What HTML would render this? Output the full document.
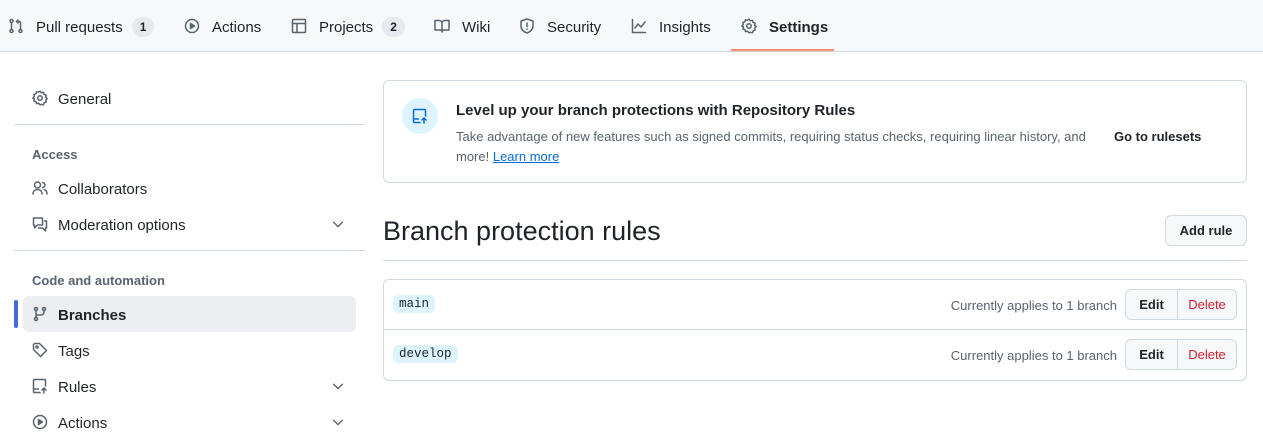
<!DOCTYPE html>
<html><head><style>
*{box-sizing:border-box;margin:0;padding:0}
body{width:1263px;height:439px;overflow:hidden;background:#fff;font-family:"Liberation Sans",sans-serif;color:#1f2328;font-size:14px;position:relative}
.abs{position:absolute}
svg{fill:none;stroke:#59636e;stroke-width:1.5;stroke-linecap:round;stroke-linejoin:round}
.hdr{left:0;top:0;width:1263px;height:52px;background:#f6f8fa;border-bottom:1px solid #d1d9e0}
.tab{position:absolute;top:18px;height:20px;line-height:20px;font-size:15px;display:flex;align-items:center;white-space:nowrap}
.tab svg{width:16px;height:16px;margin-right:12px;flex:none;position:relative;top:-2px}
.cnt{display:inline-block;background:#e6e9ed;border-radius:12px;font-size:12px;line-height:14px;padding:3px 8px;margin-left:9px;font-weight:600;position:relative;top:-1px}
.side{position:absolute;left:32px;height:20px;line-height:20px;font-size:15px;display:flex;align-items:center}
.side svg{width:16px;height:16px;margin-right:10px;flex:none;position:relative;top:-2px}
.hd{position:absolute;left:32px;font-size:13px;color:#59636e;font-weight:600}
.chev{position:absolute;left:331px;width:14px;height:14px}
.hr{position:absolute;height:1px;background:#d1d9e0}
.btn{position:absolute;border:1px solid #d1d9e0;background:#f6f8fa;font-size:13px;font-weight:600;display:flex;align-items:center;justify-content:center}
.code{position:absolute;left:393px;font-family:"Liberation Mono",monospace;font-size:12.5px;background:#ddf4ff;color:#1f2328;border-radius:6px;padding:2px 6px}
.applies{position:absolute;right:146px;font-size:13px;color:#59636e}
</style></head><body>
<div class="abs hdr"></div>
<div class="tab" style="left:8px"><svg viewBox="0 0 16 16"><circle cx="3.5" cy="3" r="1.5"/><circle cx="3.5" cy="13" r="1.5"/><path d="M3.5 4.5v7M12.5 11.5V5a1.5 1.5 0 0 0-1.5-1.5H8.5M10 2l-1.5 1.5L10 5"/><circle cx="12.5" cy="13" r="1.5"/></svg>Pull requests<span class="cnt">1</span></div>
<div class="tab" style="left:184px"><svg viewBox="0 0 16 16"><circle cx="8" cy="8" r="6.5"/><path d="M6.5 5.5v5l4-2.5z" fill="#59636e"/></svg>Actions</div>
<div class="tab" style="left:291px"><svg viewBox="0 0 16 16"><rect x="1.5" y="1.5" width="13" height="13" rx="1"/><path d="M1.5 5.5h13M6 5.5v9"/></svg>Projects<span class="cnt">2</span></div>
<div class="tab" style="left:434px"><svg viewBox="0 0 16 16"><path d="M1 2.5h4.5A2.5 2.5 0 0 1 8 5v9a2 2 0 0 0-2-2H1zM15 2.5h-4.5A2.5 2.5 0 0 0 8 5v9a2 2 0 0 1 2-2h5z"/></svg>Wiki</div>
<div class="tab" style="left:519px"><svg viewBox="0 0 16 16"><path d="M8 1l6 2v5c0 3.5-3 6-6 7-3-1-6-3.5-6-7V3z"/><path d="M8 5v3.5M8 11v.2"/></svg>Security</div>
<div class="tab" style="left:631px"><svg viewBox="0 0 16 16"><path d="M1.5 1.5v13h13M4 10l3-4 3 3 4-5"/></svg>Insights</div>
<div class="tab" style="left:741px;font-weight:600"><svg viewBox="0 0 16 16"><circle cx="8" cy="8" r="2.2"/><path d="M8 1.2l1.4 1.6 2.1-.4.6 2 2 .7-.4 2.1 1.5 1.4-1.5 1.4.4 2.1-2 .7-.6 2-2.1-.4L8 14.8l-1.4-1.6-2.1.4-.6-2-2-.7.4-2.1L.8 8l1.5-1.4-.4-2.1 2-.7.6-2 2.1.4z"/></svg>Settings</div>
<div class="abs" style="left:731px;top:49px;width:103px;height:2px;background:#fd8c73"></div>

<div class="side" style="top:90px"><svg viewBox="0 0 16 16"><circle cx="8" cy="8" r="2.2"/><path d="M8 1.2l1.4 1.6 2.1-.4.6 2 2 .7-.4 2.1 1.5 1.4-1.5 1.4.4 2.1-2 .7-.6 2-2.1-.4L8 14.8l-1.4-1.6-2.1.4-.6-2-2-.7.4-2.1L.8 8l1.5-1.4-.4-2.1 2-.7.6-2 2.1.4z"/></svg>General</div>
<div class="hr" style="left:14px;top:124px;width:351px"></div>
<div class="hd" style="top:147px">Access</div>
<div class="side" style="top:180px"><svg viewBox="0 0 16 16"><circle cx="5.5" cy="5" r="3"/><path d="M1 14c0-3 2-4.5 4.5-4.5S10 11 10 14M10.5 2.5a2.5 2.5 0 0 1 0 5M12 9.5c2 .5 3 2 3 4.5"/></svg>Collaborators</div>
<div class="side" style="top:216px"><svg viewBox="0 0 16 16"><path d="M1.5 2h9v7h-5l-3 3V9h-1zM12.5 5h2v7h-1v3l-3-3h-4"/></svg>Moderation options</div>
<svg class="chev" style="top:217px" viewBox="0 0 16 16"><path d="M3 6l5 5 5-5"/></svg>
<div class="hr" style="left:14px;top:250px;width:351px"></div>
<div class="hd" style="top:273px">Code and automation</div>
<div class="abs" style="left:23px;top:296px;width:333px;height:36px;background:#eceef1;border-radius:6px"></div>
<div class="abs" style="left:14px;top:300px;width:4px;height:28px;background:#4469d8;border-radius:2px"></div>
<div class="side" style="top:306px;font-weight:600"><svg viewBox="0 0 16 16"><circle cx="4" cy="3" r="1.5"/><circle cx="4" cy="13" r="1.5"/><circle cx="12" cy="3" r="1.5"/><path d="M4 4.5v7M12 4.5V6a3 3 0 0 1-3 3H6a2 2 0 0 0-2 2"/></svg>Branches</div>
<div class="side" style="top:342px"><svg viewBox="0 0 16 16"><path d="M1.5 2.5v5l7 7 6-6-7-7h-5z"/><circle cx="5" cy="5" r="1"/></svg>Tags</div>
<div class="side" style="top:378px"><svg viewBox="0 0 16 16"><path d="M8 14.5H2.5a1 1 0 0 1-1-1v-11a1 1 0 0 1 1-1h10a1 1 0 0 1 1 1V8M1.5 11h5M12 15V10M10 12l2-2 2 2"/></svg>Rules</div>
<svg class="chev" style="top:379px" viewBox="0 0 16 16"><path d="M3 6l5 5 5-5"/></svg>
<div class="side" style="top:414px"><svg viewBox="0 0 16 16"><circle cx="8" cy="8" r="6.5"/><path d="M6.5 5.5v5l4-2.5z" fill="#59636e"/></svg>Actions</div>
<svg class="chev" style="top:415px" viewBox="0 0 16 16"><path d="M3 6l5 5 5-5"/></svg>

<div class="abs" style="left:383px;top:80px;width:864px;height:103px;border:1px solid #d1d9e0;border-radius:6px"></div>
<div class="abs" style="left:402px;top:98px;width:36px;height:36px;border-radius:50%;background:#ddf4ff"></div>
<svg class="abs" style="left:412px;top:108px;width:16px;height:16px;stroke:#0969da" viewBox="0 0 16 16"><path d="M8 14.5H2.5a1 1 0 0 1-1-1v-11a1 1 0 0 1 1-1h10a1 1 0 0 1 1 1V8M1.5 11h5M12 15V10M10 12l2-2 2 2"/></svg>
<div class="abs" style="left:456px;top:102px;font-size:15px;font-weight:600">Level up your branch protections with Repository Rules</div>
<div class="abs" style="left:456px;top:127px;width:660px;font-size:13px;line-height:20px;color:#59636e">Take advantage of new features such as signed commits, requiring status checks, requiring linear history, and more! <span style="color:#0969da;text-decoration:underline">Learn more</span></div>
<div class="abs" style="left:1114px;top:129px;font-size:13px;font-weight:600">Go to rulesets</div>

<div class="abs" style="left:383px;top:216px;font-size:27px">Branch protection rules</div>
<div class="btn" style="left:1165px;top:215px;width:82px;height:31px;border-radius:6px">Add rule</div>
<div class="hr" style="left:383px;top:260px;width:864px"></div>

<div class="abs" style="left:383px;top:279px;width:864px;height:102px;border:1px solid #d1d9e0;border-radius:6px"></div>
<div class="hr" style="left:384px;top:329px;width:862px"></div>
<div class="code" style="top:295px">main</div>
<div class="applies" style="top:298px">Currently applies to 1 branch</div>
<div class="btn" style="left:1125px;top:289px;width:53px;height:31px;border-radius:6px 0 0 6px">Edit</div>
<div class="btn" style="left:1177px;top:289px;width:60px;height:31px;border-radius:0 6px 6px 0;color:#cf222e;font-weight:400">Delete</div>
<div class="code" style="top:345px">develop</div>
<div class="applies" style="top:348px">Currently applies to 1 branch</div>
<div class="btn" style="left:1125px;top:339px;width:53px;height:31px;border-radius:6px 0 0 6px">Edit</div>
<div class="btn" style="left:1177px;top:339px;width:60px;height:31px;border-radius:0 6px 6px 0;color:#cf222e;font-weight:400">Delete</div>
</body></html>
